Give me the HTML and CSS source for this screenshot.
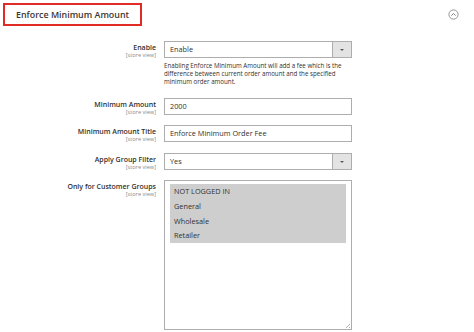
FILE: index.html
```html
<!DOCTYPE html>
<html lang="en">
<head>
    <meta charset="UTF-8">
    <title>Enforce Minimum Amount</title>
    <link rel="stylesheet" href="styles.css">
</head>
<body>
    <div class="section-head">
        <div class="title-box">Enforce Minimum Amount</div>
        <svg class="toggle" width="11" height="11" viewBox="0 0 11 11">
            <circle cx="5.5" cy="5.5" r="4.6" fill="none" stroke="#8a8a8a" stroke-width="0.9"/>
            <path d="M3.4 6.6 L5.5 4.5 L7.6 6.6" fill="none" stroke="#6f6f6f" stroke-width="0.9"/>
        </svg>
    </div>

    <div class="form">
        <div class="row">
            <div class="label">Enable<span class="scope">[store view]</span></div>
            <div class="control">
                <div class="select"><span>Enable</span><i class="arrow"></i></div>
                <p class="note">Enabling Enforce Minimum Amount will add a fee which is the difference between current order amount and the specified minimum order amount.</p>
            </div>
        </div>
        <div class="row">
            <div class="label">Minimum Amount<span class="scope">[store view]</span></div>
            <div class="control"><div class="input">2000</div></div>
        </div>
        <div class="row">
            <div class="label">Minimum Amount Title<span class="scope">[store view]</span></div>
            <div class="control"><div class="input">Enforce Minimum Order Fee</div></div>
        </div>
        <div class="row">
            <div class="label">Apply Group Filter<span class="scope">[store view]</span></div>
            <div class="control">
                <div class="select"><span>Yes</span><i class="arrow"></i></div>
            </div>
        </div>
        <div class="row">
            <div class="label">Only for Customer Groups<span class="scope">[store view]</span></div>
            <div class="control">
                <div class="multiselect">
                    <div class="option">NOT LOGGED IN</div>
                    <div class="option">General</div>
                    <div class="option">Wholesale</div>
                    <div class="option">Retailer</div>
                    <i class="grip"></i>
                </div>
            </div>
        </div>
    </div>
</body>
</html>
```

FILE: styles.css
```css
body {
    margin: 0;
    font-family: 'Open Sans', sans-serif;
    color: #303030;
    background: #fff;
    overflow: hidden;
}
.section-head {
    display: flex;
    align-items: center;
    justify-content: space-between;
    padding: 3px 15px 0 3px;
    height: 23px;
}
.title-box {
    border: 2px solid #e02b27;
    height: 19px;
    width: 124px;
    box-sizing: content-box;
    padding-left: 11px;
    font-size: 8.9px;
    font-weight: 600;
    line-height: 19px;
    color: #41362f;
}
.form {
    padding-top: 15px;
}
.row {
    display: flex;
    gap: 8px;
    margin-bottom: 10.5px;
}
.label {
    width: 156px;
    text-align: right;
    font-size: 7px;
    font-weight: 600;
    line-height: 9px;
    padding-top: 2px;
}
.scope {
    display: block;
    font-size: 5.6px;
    font-weight: 400;
    color: #8a8a8a;
    line-height: 6px;
}
.control {
    width: 188px;
}
.input, .select {
    height: 17px;
    box-sizing: border-box;
    border: 1px solid #adadad;
    font-size: 7.3px;
    line-height: 15px;
    padding-left: 5px;
}
.select {
    display: flex;
    justify-content: space-between;
    padding-left: 0;
}
.select span {
    padding-left: 5px;
}
.arrow {
    width: 18px;
    background: #e3e3e3;
    border-left: 1px solid #adadad;
    position: relative;
}
.arrow::after {
    content: '';
    position: absolute;
    left: 7px;
    top: 7px;
    border-left: 2px solid transparent;
    border-right: 2px solid transparent;
    border-top: 2px solid #5a5a5a;
}
.note {
    margin: 4px 0 2px;
    font-size: 6.2px;
    line-height: 7.8px;
    padding-right: 2px;
}
.multiselect {
    height: 150px;
    box-sizing: border-box;
    border: 1px solid #adadad;
    padding: 3px 5px 0;
    position: relative;
}
.option {
    background: #cecece;
    height: 14.6px;
    line-height: 14.6px;
    padding-left: 4px;
    font-size: 7.3px;
}
.grip {
    position: absolute;
    right: 1px;
    bottom: 1px;
    width: 4px;
    height: 4px;
    background: linear-gradient(135deg, transparent 50%, #b0b0b0 50%, #b0b0b0 62%, transparent 62%, transparent 78%, #b0b0b0 78%);
}
```
